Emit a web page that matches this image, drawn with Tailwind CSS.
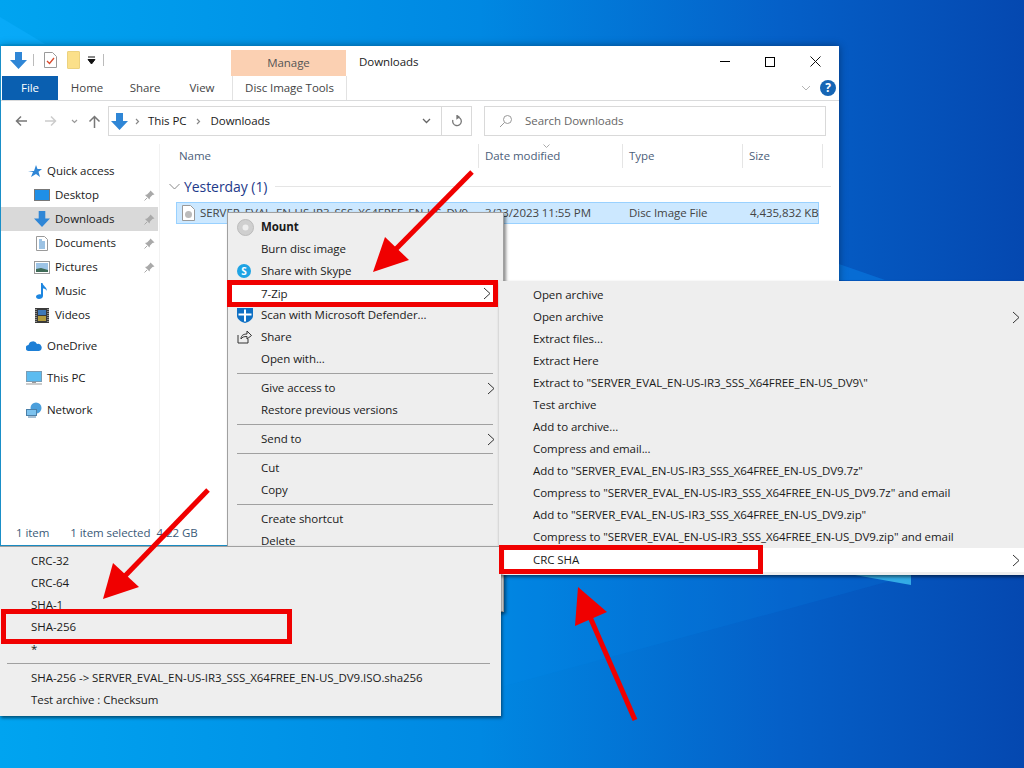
<!DOCTYPE html>
<html lang="en">
<head>
    <meta charset="UTF-8">
    <title>Downloads - 7-Zip CRC SHA</title>
    <script src="https://cdn.jsdelivr.net/npm/@tailwindcss/browser@4"></script>
</head>
<body class="overflow-hidden">
<div class="relative w-[1024px] h-[768px] overflow-hidden font-['Open_Sans','Liberation_Sans',sans-serif] text-[11.5px] tracking-[-0.06px] text-[#1a1a1a] bg-[linear-gradient(90deg,#00a4f0_0px,#0088e2_480px,#0560c8_780px,#0548b0_1024px)]">

    <!-- wallpaper light -->
    <svg class="absolute inset-0" width="1024" height="768">
        <polygon points="0,17 45,44 0,44" fill="#10b0ff" opacity="0.5"/>
        <polygon points="839,264 885,280 839,280" fill="#0a80e8" opacity="0.5"/>
        <polygon points="490,575 912,575 490,690" fill="#0a90f0" opacity="0.15"/>
        <polygon points="855,575 911,575 911,585" fill="#3fc0f0" opacity="0.8"/>
    </svg>

    <!-- Explorer window -->
    <div class="absolute left-0 top-[46px] w-[839px] h-[500px] bg-white border-l border-b border-[#1a8fc8] shadow-[0_0_8px_rgba(0,0,0,0.4)] flex flex-col">
        <!-- title bar -->
        <div class="h-[30px] flex items-start">
            <div class="flex items-center gap-[5px] pl-[9px] pt-[5px] w-[230px] shrink-0">
                <svg width="17" height="17" viewBox="0 0 17 17"><path d="M5 0h7v8h5l-8.500 9L0 8h5z" fill="#2f86d6"/></svg>
                <span class="w-px h-[12px] bg-[#bbb] ml-[1px]"></span>
                <svg class="ml-[5px]" width="13" height="16" viewBox="0 0 13 16"><path d="M.5.500h8l4 4v11H.5z" fill="#fff" stroke="#9a9a9a"/><path d="M3 9l2.500 2.500L10 6" fill="none" stroke="#d9482b" stroke-width="1.300"/></svg>
                <span class="w-[13px] h-[18px] ml-[5px] bg-[#fbe08a] border border-[#ecd27e] rounded-[1px]"></span>
                <svg class="ml-[2px]" width="9" height="9" viewBox="0 0 9 9"><path d="M1 1h7M1 3.500h7L4.500 8z" stroke="#111" fill="#111" stroke-width="1"/></svg>
                <span class="w-px h-[12px] bg-[#bbb] ml-[2px]"></span>
            </div>
            <div class="w-[115px] h-[26px] mt-[4px] bg-[#fbd0b2] flex items-center justify-center text-[#555]">Manage</div>
            <div class="pl-[13px] pt-[7px] text-[#222]">Downloads</div>
            <div class="ml-auto flex items-center gap-[35px] pr-[18px] pt-[10px]">
                <span class="w-[10px] h-px bg-black"></span>
                <span class="w-[10px] h-[10px] border border-black"></span>
                <svg width="11" height="11" viewBox="0 0 11 11"><path d="M.5.500l10 10M10.500.500l-10 10" stroke="#111" fill="none"/></svg>
            </div>
        </div>

        <!-- ribbon tabs -->
        <div class="h-[25px] flex items-stretch border-b border-[#dadbdc] text-[#444]">
            <div class="w-[56px] ml-[1px] bg-[#0a5fb0] text-white flex items-center justify-center">File</div>
            <div class="w-[58px] flex items-center justify-center">Home</div>
            <div class="w-[58px] flex items-center justify-center">Share</div>
            <div class="w-[56px] flex items-center justify-center">View</div>
            <div class="w-[115px] ml-[2px] border-x border-[#e2e2e2] flex items-center justify-center">Disc Image Tools</div>
            <div class="ml-auto flex items-center gap-[9px] pr-[3px]">
                <svg width="10" height="6" viewBox="0 0 10 6"><path d="M1 1l4 4 4-4" fill="none" stroke="#b5b5b5"/></svg>
                <span class="w-[16px] h-[16px] rounded-full bg-[#1565b5] text-white font-bold text-[12px] leading-[16px] text-center">?</span>
            </div>
        </div>

        <!-- address row -->
        <div class="h-[42px] flex items-center pt-[1px] pb-[5px] mt-[1px]">
            <div class="w-[107px] flex items-center pl-[14px] shrink-0">
                <svg width="13" height="12" viewBox="0 0 13 12"><path d="M12 6H2M6 1.500L1.500 6 6 10.500" fill="none" stroke="#777" stroke-width="1.500"/></svg>
                <svg class="ml-[16px]" width="13" height="12" viewBox="0 0 13 12"><path d="M1 6h10M7 1.500L11.500 6 7 10.500" fill="none" stroke="#ccc" stroke-width="1.500"/></svg>
                <svg class="ml-[14px]" width="7" height="5" viewBox="0 0 7 5"><path d="M1 1l2.500 2.500L6 1" fill="none" stroke="#999" stroke-width="1.200"/></svg>
                <svg class="ml-[10px]" width="13" height="13" viewBox="0 0 13 13"><path d="M6.500 13V2M1.500 6.500l5-5 5 5" fill="none" stroke="#777" stroke-width="1.500"/></svg>
            </div>
            <div class="w-[364px] h-[30px] border border-[#d9d9d9] flex items-center shrink-0">
                <svg class="ml-[2px]" width="17" height="17" viewBox="0 0 17 17"><path d="M5 0h7v8h5l-8.500 9L0 8h5z" fill="#2f86d6"/></svg>
                <svg class="ml-[7px]" width="5" height="7" viewBox="0 0 5 7"><path d="M1 1l2.500 2.500L1 6" fill="none" stroke="#888" stroke-width="1.200"/></svg>
                <span class="ml-[8px]">This PC</span>
                <svg class="ml-[9px]" width="5" height="7" viewBox="0 0 5 7"><path d="M1 1l2.500 2.500L1 6" fill="none" stroke="#888" stroke-width="1.200"/></svg>
                <span class="ml-[10px]">Downloads</span>
                <div class="ml-auto h-full flex items-center">
                    <svg class="mr-[10px]" width="9" height="6" viewBox="0 0 9 6"><path d="M1 1l3.500 3.500L8 1" fill="none" stroke="#666" stroke-width="1.300"/></svg>
                    <div class="w-[30px] h-full border-l border-[#d9d9d9] flex items-center justify-center">
                        <svg width="12" height="12" viewBox="0 0 12 12"><path d="M6 2a4.300 4.300 0 1 1-4.100 3M6 .500v3L8 2z" fill="none" stroke="#777" stroke-width="1.300"/></svg>
                    </div>
                </div>
            </div>
            <div class="ml-[12px] w-[342px] h-[30px] border border-[#d9d9d9] flex items-center text-[#666] shrink-0">
                <svg class="ml-[14px]" width="14" height="14" viewBox="0 0 14 14"><circle cx="8.500" cy="5.500" r="4" fill="none" stroke="#999"/><path d="M5.500 8.500L1 13" stroke="#999"/></svg>
                <span class="ml-[12px]">Search Downloads</span>
            </div>
        </div>

        <div class="flex-1 flex min-h-0">
            <!-- sidebar -->
            <div class="w-[159px] shrink-0 border-r border-[#f2f2f2] flex flex-col pt-[15px] text-[#1a1a1a]">
                <div class="h-[24px] flex items-center pl-[27px] gap-[5px]">
                    <svg width="14" height="14" viewBox="0 0 14 14"><path d="M8 1l1.500 4H14l-3.500 2.800L12 13 8 10l-5 3 2-5-5-1h6z" fill="#2f86d6"/></svg>
                    <span>Quick access</span>
                </div>
                <div class="h-[24px] flex items-center pl-[33px] pr-[4px] gap-[5px]">
                    <span class="w-[16px] h-[12px] bg-[#1f8fe6] border border-[#777]"></span>
                    <span>Desktop</span>
                    <svg class="ml-auto" width="11" height="11" viewBox="0 0 11 11"><path d="M6.500.500l4 4-2 .500-2.500 2.500-.500 2L1 5l2-.500L5.500 2z" fill="#a9a9a9"/><path d="M3 8L.500 10.500" stroke="#a9a9a9"/></svg>
                </div>
                <div class="h-[24px] flex items-center pl-[33px] pr-[3px] gap-[5px] mr-[1px] bg-[#d9d9d9]">
                    <svg width="16" height="16" viewBox="0 0 17 17"><path d="M5 0h7v8h5l-8.500 9L0 8h5z" fill="#2f86d6"/></svg>
                    <span>Downloads</span>
                    <svg class="ml-auto" width="11" height="11" viewBox="0 0 11 11"><path d="M6.500.500l4 4-2 .500-2.500 2.500-.500 2L1 5l2-.500L5.500 2z" fill="#a9a9a9"/><path d="M3 8L.500 10.500" stroke="#a9a9a9"/></svg>
                </div>
                <div class="h-[24px] flex items-center pl-[34px] pr-[4px] gap-[6px]">
                    <svg width="14" height="15" viewBox="0 0 14 15"><path d="M1.500.500h8l3 3v11h-11z" fill="#fff" stroke="#9a9a9a"/><path d="M4 6h6M4 8h6M4 10h6M4 12h6M4 4h3" stroke="#3a86c8"/></svg>
                    <span>Documents</span>
                    <svg class="ml-auto" width="11" height="11" viewBox="0 0 11 11"><path d="M6.500.500l4 4-2 .500-2.500 2.500-.500 2L1 5l2-.500L5.500 2z" fill="#a9a9a9"/><path d="M3 8L.500 10.500" stroke="#a9a9a9"/></svg>
                </div>
                <div class="h-[24px] flex items-center pl-[33px] pr-[4px] gap-[5px]">
                    <svg width="16" height="13" viewBox="0 0 16 13"><rect x=".5" y=".5" width="15" height="12" fill="#fff" stroke="#999"/><rect x="2" y="2" width="12" height="9" fill="#9dc4e6"/><path d="M2 8l5-1 7 2v2H2z" fill="#3f6b57"/></svg>
                    <span>Pictures</span>
                    <svg class="ml-auto" width="11" height="11" viewBox="0 0 11 11"><path d="M6.500.500l4 4-2 .500-2.500 2.500-.500 2L1 5l2-.500L5.500 2z" fill="#a9a9a9"/><path d="M3 8L.500 10.500" stroke="#a9a9a9"/></svg>
                </div>
                <div class="h-[24px] flex items-center pl-[34px] gap-[6px]">
                    <svg width="14" height="16" viewBox="0 0 14 16"><path d="M6 0h1.500c.5 3 4.500 4 4.500 8-1-2-3-2.500-4-2.500V13c0 2-2 3-4 3s-3-1-3-2.200C1 12 3.500 11 6 11.500z" fill="#1d86e0"/></svg>
                    <span>Music</span>
                </div>
                <div class="h-[24px] flex items-center pl-[34px] gap-[6px]">
                    <svg width="14" height="15" viewBox="0 0 14 15"><rect width="14" height="15" fill="#3a3a3a"/><rect x="3" y="2" width="8" height="5" fill="#3f79b8"/><rect x="3" y="8" width="8" height="5" fill="#b39b3c"/><path d="M1 1v13M13 1v13" stroke="#ddd" stroke-dasharray="1 1"/></svg>
                    <span>Videos</span>
                </div>
                <div class="h-[32px] mt-[3px] flex items-center pl-[25px] gap-[5px]">
                    <svg width="16" height="10" viewBox="0 0 16 10"><path d="M3 10a3 3 0 0 1-.500-6A4.500 4.500 0 0 1 11 3a3.500 3.500 0 0 1 2 7z" fill="#1d7fd6"/></svg>
                    <span>OneDrive</span>
                </div>
                <div class="h-[32px] flex items-center pl-[25px] gap-[5px]">
                    <svg width="16" height="15" viewBox="0 0 16 15"><rect x=".5" y=".5" width="15" height="10" fill="#5cbcf0" stroke="#7a9db5"/><path d="M0 13h16" stroke="#999"/><path d="M6 11h4v1H6z" fill="#999"/></svg>
                    <span>This PC</span>
                </div>
                <div class="h-[32px] flex items-center pl-[25px] gap-[5px]">
                    <svg width="16" height="16" viewBox="0 0 16 16"><circle cx="10" cy="6" r="5.500" fill="#4b9fdc"/><rect x=".5" y="7.500" width="10" height="6" fill="#7cc2ee" stroke="#4a7fa8"/><path d="M2 15h8" stroke="#4a7fa8"/></svg>
                    <span>Network</span>
                </div>
                <div class="mt-auto h-[24px] -mr-[80px] flex items-center pl-[15px] text-[#3a5a78] whitespace-nowrap">
                    <span>1 item</span>
                    <span class="ml-[21px]">1 item selected</span>
                    <span class="ml-[6px]">4.22 GB</span>
                </div>
            </div>

            <!-- file list -->
            <div class="flex-1 flex flex-col">
                <div class="h-[23px] flex items-center text-[#4c607a]">
                    <span class="w-[318px] pl-[19px] shrink-0">Name</span>
                    <div class="relative w-[144px] h-[24px] border-l border-[#e5e5e5] flex items-center pl-[6px] shrink-0">
                        <span>Date modified</span>
                        <svg class="absolute left-[64px] top-0" width="7" height="4" viewBox="0 0 7 4"><path d="M.5.500l3 3 3-3" fill="none" stroke="#aaa"/></svg>
                    </div>
                    <div class="w-[120px] h-[24px] border-l border-[#e5e5e5] flex items-center pl-[6px] shrink-0">Type</div>
                    <div class="w-[81px] h-[24px] border-x border-[#e5e5e5] flex items-center pl-[6px] shrink-0">Size</div>
                </div>
                <div class="h-[30px] flex items-center pl-[9px] pt-[8px] pr-[8px]">
                    <svg width="11" height="7" viewBox="0 0 11 7"><path d="M.5 1l5 5 5-5" fill="none" stroke="#8a8a8a"/></svg>
                    <span class="ml-[4px] text-[14px] text-[#1e3a8a]">Yesterday (1)</span>
                    <span class="flex-1 h-px bg-[#e5e5e5] ml-[8px]"></span>
                </div>
                <div class="mt-[5px] ml-[16px] w-[643px] h-[22px] bg-[#cce8ff] border border-[#99d1ff] flex items-center text-[#444] whitespace-nowrap">
                    <svg class="ml-[5px] shrink-0" width="13" height="16" viewBox="0 0 13 16"><path d="M.5.500h8l4 4v11H.5z" fill="#fff" stroke="#999"/><circle cx="6.500" cy="9.500" r="3.500" fill="#bbb"/></svg>
                    <span class="ml-[5px] w-[285px] shrink-0">SERVER_EVAL_EN-US-IR3_SSS_X64FREE_EN-US_DV9</span>
                    <span class="w-[144px] shrink-0">3/23/2023 11:55 PM</span>
                    <span class="w-[121px] shrink-0">Disc Image File</span>
                    <span>4,435,832 KB</span>
                </div>
            </div>
        </div>
    </div>

    <!-- shell context menu -->
    <div class="absolute left-[227px] top-[212px] w-[277px] h-[400px] bg-[#eeeeee] border border-[#a0a0a0] shadow-[2px_2px_3px_rgba(0,0,0,0.45)] pt-[3px] pl-[33px] pr-[5px] flex flex-col whitespace-nowrap">
        <div class="relative h-[22px] flex items-center font-bold">
            <svg class="absolute -left-[24px]" width="17" height="17" viewBox="0 0 17 17"><circle cx="8.500" cy="8.500" r="8" fill="#cfcfcf" stroke="#bbb"/><circle cx="8.500" cy="8.500" r="3" fill="#eee"/></svg>
            Mount
        </div>
        <div class="h-[22px] flex items-center">Burn disc image</div>
        <div class="relative h-[22px] flex items-center">
            <span class="absolute -left-[24px] w-[14px] h-[14px] rounded-full bg-[#1ea3e4] text-white text-[10px] font-bold leading-[14px] text-center">S</span>
            Share with Skype
        </div>
        <div class="h-[22px]"></div>
        <div class="relative h-[22px] flex items-center">
            <svg class="absolute -left-[24px]" width="16" height="16" viewBox="0 0 16 16"><path d="M0 1h16v8c0 3-4 6-8 7-4-1-8-4-8-7z" fill="#0f70c4"/><path d="M7 2.500h2v4h5.500v2H9V14.500H7V8.500H1.500v-2H7z" fill="#fff"/></svg>
            Scan with Microsoft Defender...
        </div>
        <div class="relative h-[22px] flex items-center">
            <svg class="absolute -left-[24px]" width="15" height="14" viewBox="0 0 15 14"><path d="M1 5v8h10V9M4 9c0-4 3-5 6-5V1l4.500 4.500L10 9V6.500C7 6.500 5 7 4 9z" fill="none" stroke="#333"/></svg>
            Share
        </div>
        <div class="h-[22px] flex items-center">Open with...</div>
        <div class="h-px bg-[#a0a0a0] -ml-[24px] mr-[5px] my-[3px]"></div>
        <div class="h-[22px] flex items-center justify-between">Give access to
            <svg class="mr-[3px]" width="8" height="13" viewBox="0 0 8 13"><path d="M1 1l6 5.500L1 12" fill="none" stroke="#333"/></svg>
        </div>
        <div class="h-[22px] flex items-center">Restore previous versions</div>
        <div class="h-px bg-[#a0a0a0] -ml-[24px] mr-[5px] my-[3px]"></div>
        <div class="h-[22px] flex items-center justify-between">Send to
            <svg class="mr-[3px]" width="8" height="13" viewBox="0 0 8 13"><path d="M1 1l6 5.500L1 12" fill="none" stroke="#333"/></svg>
        </div>
        <div class="h-px bg-[#a0a0a0] -ml-[24px] mr-[5px] my-[3px]"></div>
        <div class="h-[22px] flex items-center">Cut</div>
        <div class="h-[22px] flex items-center">Copy</div>
        <div class="h-px bg-[#a0a0a0] -ml-[24px] mr-[5px] my-[3px]"></div>
        <div class="h-[22px] flex items-center">Create shortcut</div>
        <div class="h-[22px] flex items-center">Delete</div>
    </div>

    <!-- 7-Zip submenu -->
    <div class="absolute left-[499px] top-[281px] w-[526px] h-[294px] bg-[#eeeeee] shadow-[1px_2px_3px_rgba(0,0,0,0.5)] pt-[3px] pl-[34px] pr-[5px] flex flex-col whitespace-nowrap">
        <div class="h-[22px] flex items-center">Open archive</div>
        <div class="h-[22px] flex items-center justify-between">Open archive
            <svg width="8" height="13" viewBox="0 0 8 13"><path d="M1 1l6 5.500L1 12" fill="none" stroke="#333"/></svg>
        </div>
        <div class="h-[22px] flex items-center">Extract files...</div>
        <div class="h-[22px] flex items-center">Extract Here</div>
        <div class="h-[22px] flex items-center">Extract to "SERVER_EVAL_EN-US-IR3_SSS_X64FREE_EN-US_DV9\"</div>
        <div class="h-[22px] flex items-center">Test archive</div>
        <div class="h-[22px] flex items-center">Add to archive...</div>
        <div class="h-[22px] flex items-center">Compress and email...</div>
        <div class="h-[22px] flex items-center">Add to "SERVER_EVAL_EN-US-IR3_SSS_X64FREE_EN-US_DV9.7z"</div>
        <div class="h-[22px] flex items-center">Compress to "SERVER_EVAL_EN-US-IR3_SSS_X64FREE_EN-US_DV9.7z" and email</div>
        <div class="h-[22px] flex items-center">Add to "SERVER_EVAL_EN-US-IR3_SSS_X64FREE_EN-US_DV9.zip"</div>
        <div class="h-[22px] flex items-center">Compress to "SERVER_EVAL_EN-US-IR3_SSS_X64FREE_EN-US_DV9.zip" and email</div>
        <div class="h-[24px] bg-white -ml-[34px] -mr-[5px] pl-[34px] pr-[5px] flex items-center justify-between">CRC SHA
            <svg width="8" height="13" viewBox="0 0 8 13"><path d="M1 1l6 5.500L1 12" fill="none" stroke="#333"/></svg>
        </div>
    </div>

    <!-- 7-Zip row highlight in the shell menu -->
    <div class="absolute left-[227px] top-[280px] w-[271px] h-[27px] bg-white border-[5px] border-[#f00000] flex items-center justify-between pl-[29px] pr-[2px] whitespace-nowrap">7-Zip
        <svg width="8" height="13" viewBox="0 0 8 13"><path d="M1 1l6 5.500L1 12" fill="none" stroke="#333"/></svg>
    </div>

    <!-- CRC SHA submenu -->
    <div class="absolute left-0 top-[546px] w-[501px] h-[170px] bg-[#eeeeee] border-t border-[#a0a0a0] shadow-[1px_2px_3px_rgba(0,0,0,0.5)] pt-[3px] pl-[31px] pr-[5px] flex flex-col whitespace-nowrap">
        <div class="h-[22px] flex items-center">CRC-32</div>
        <div class="h-[22px] flex items-center">CRC-64</div>
        <div class="h-[22px] flex items-center">SHA-1</div>
        <div class="h-[22px] flex items-center">SHA-256</div>
        <div class="h-[22px] flex items-center">*</div>
        <div class="h-px bg-[#a0a0a0] -ml-[24px] mr-[6px] my-[3px]"></div>
        <div class="h-[22px] flex items-center">SHA-256 -&gt; SERVER_EVAL_EN-US-IR3_SSS_X64FREE_EN-US_DV9.ISO.sha256</div>
        <div class="h-[22px] flex items-center">Test archive : Checksum</div>
    </div>

    <!-- red highlights and arrows -->
    <div class="absolute left-[499px] top-[545px] w-[264px] h-[29px] border-[5px] border-[#f00000]"></div>
    <div class="absolute left-[1px] top-[609px] w-[291px] h-[35px] border-[5px] border-[#f00000]"></div>
    <svg class="absolute inset-0 pointer-events-none" width="1024" height="768">
        <path d="M472 172L395 250" stroke="#f00000" stroke-width="5" fill="none"/>
        <polygon points="373,272 385,237 409,260" fill="#f00000"/>
        <path d="M208 490L124 577" stroke="#f00000" stroke-width="5" fill="none"/>
        <polygon points="103,599 113,563 139,587" fill="#f00000"/>
        <path d="M635 720L590 617" stroke="#f00000" stroke-width="5" fill="none"/>
        <polygon points="578,587 575,626 607,612" fill="#f00000"/>
    </svg>
</div>
</body>
</html>
